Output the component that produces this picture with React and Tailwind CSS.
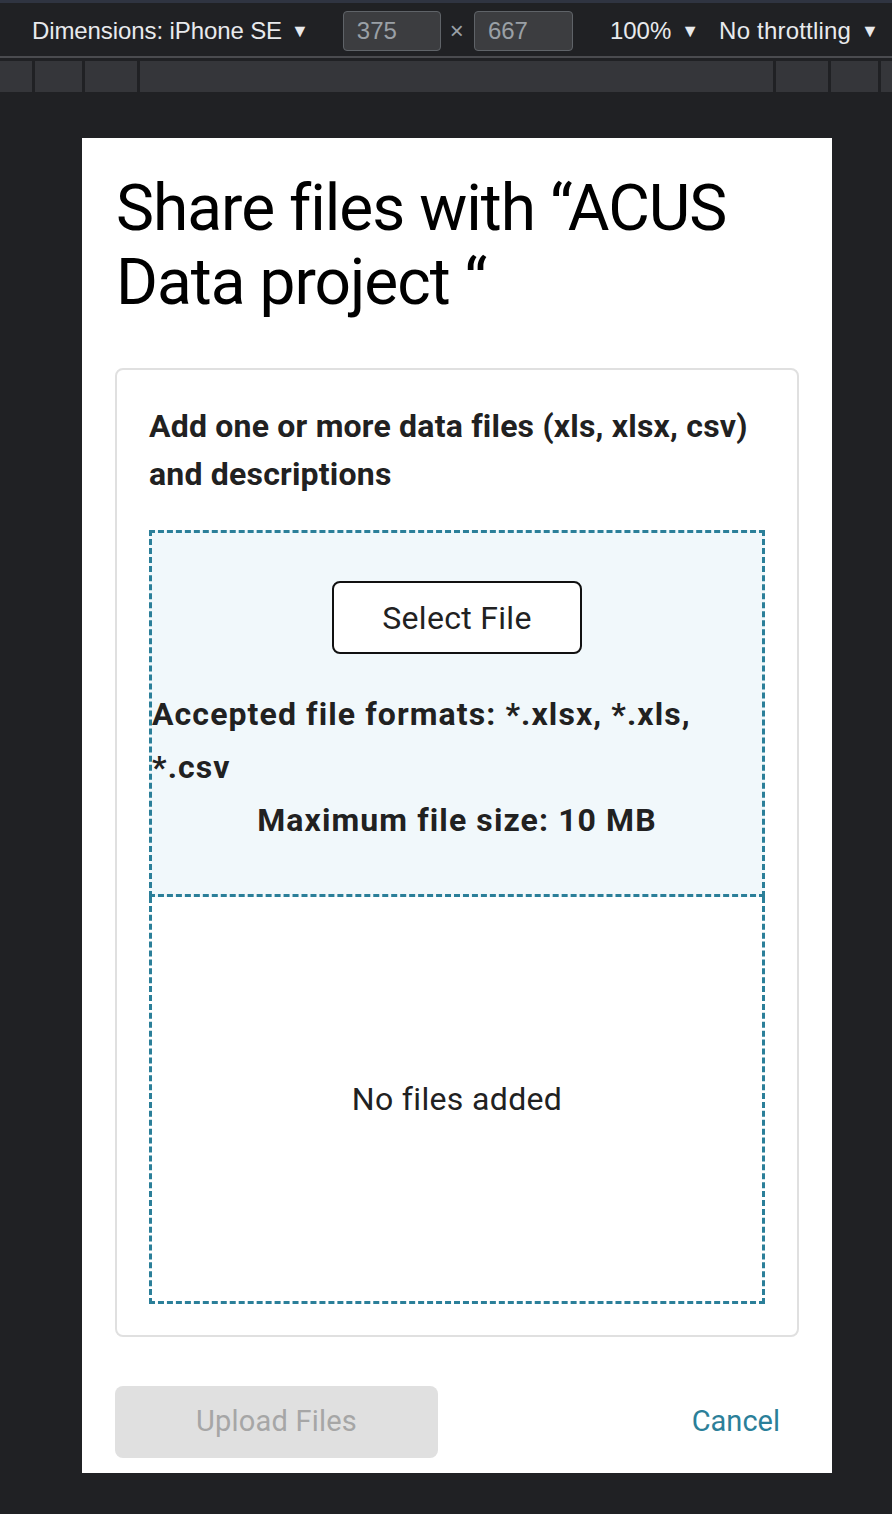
export default function App() {
  const roboto = { fontFamily: "Roboto, sans-serif" };

  return (
    <div className="min-h-screen w-[892px] bg-[#202124]">
      {/* devtools bar */}
      <div className="h-[3px] bg-[#2f3441]" />
      <div
        className="flex h-[53px] items-center pt-[3px] text-[24px] text-[#e8eaed]"
        style={{ fontFamily: '"Liberation Sans", Arial, sans-serif' }}
      >
        <span className="ml-[32px] tracking-[-0.1px]">Dimensions: iPhone SE</span>
        <span className="ml-[9px] text-[18px]">▼</span>
        <div className="ml-[34px] flex h-[40px] w-[98px] items-center rounded-[4px] border border-[#5f6368] bg-[#3c3d40] pl-[13px] text-[#9aa0a6]">
          375
        </div>
        <span className="ml-[9px] mr-[10px] text-[#9aa0a6]">×</span>
        <div className="flex h-[40px] w-[99px] items-center rounded-[4px] border border-[#5f6368] bg-[#3c3d40] pl-[13px] text-[#9aa0a6]">
          667
        </div>
        <span className="ml-[37px]">100%</span>
        <span className="ml-[10px] text-[18px]">▼</span>
        <span className="ml-[20px] tracking-[0.2px]">No throttling</span>
        <span className="ml-[10px] text-[18px]">▼</span>
      </div>
      <div className="h-[2px] bg-[#4a4b4f]" />
      <div className="mt-[3px] flex h-[31px] bg-[#35363a]">
        <div className="w-[32px]" />
        <div className="w-[50px] border-l-[3px] border-[#202124]" />
        <div className="w-[55px] border-l-[3px] border-[#202124]" />
        <div className="flex-1 border-l-[3px] border-[#202124]" />
        <div className="w-[55px] border-l-[3px] border-[#202124]" />
        <div className="w-[50px] border-l-[3px] border-[#202124]" />
        <div className="w-[14px] border-l-[3px] border-[#202124]" />
      </div>

      {/* modal card */}
      <div className="ml-[82px] mt-[46px] w-[750px] bg-white px-[33px] pb-[15px] pt-[34px]" style={roboto}>
        <h1 className="pl-[1px] text-[64px] leading-[74px] font-normal tracking-[-1px] text-black">
          Share files with “ACUS Data project “
        </h1>

        <div className="mt-[48px] rounded-[8px] border-2 border-[#e0e0e0] px-[32px] pb-[31px] pt-[32px]">
          <p className="text-[32px] font-bold leading-[48px] tracking-[0.2px] text-[#212121]">
            Add one or more data files (xls, xlsx, csv) and descriptions
          </p>

          <div className="mt-[32px] border-[3px] border-dashed border-[#2b7f99] bg-[#f1f8fb] pb-[47px] pt-[48px]">
            <div className="flex justify-center">
              <button className="h-[73px] w-[250px] rounded-[8px] border-2 border-[#111] bg-white text-[32px] tracking-[0.3px] text-[#212121]">
                Select File
              </button>
            </div>
            <p className="mt-[34px] text-[32px] font-bold leading-[53px] tracking-[1.1px] text-[#212121]">
              Accepted file formats: *.xlsx, *.xls, *.csv
            </p>
            <p className="text-center text-[32px] font-bold leading-[53px] tracking-[1.1px] text-[#212121]">
              Maximum file size: 10 MB
            </p>
          </div>

          <div className="flex h-[407px] items-center justify-center border-[3px] border-t-0 border-dashed border-[#2b7f99] text-[32px] tracking-[0.35px] text-[#212121]">
            No files added
          </div>
        </div>

        <div className="mt-[49px] flex items-center justify-between">
          <button className="h-[72px] w-[323px] rounded-[8px] bg-[#e0e0e0] text-[29px] tracking-[0.2px] text-[#a6a6a6]">
            Upload Files
          </button>
          <button className="mr-[19px] text-[29px] text-[#2b7f99]">Cancel</button>
        </div>
      </div>
    </div>
  );
}
